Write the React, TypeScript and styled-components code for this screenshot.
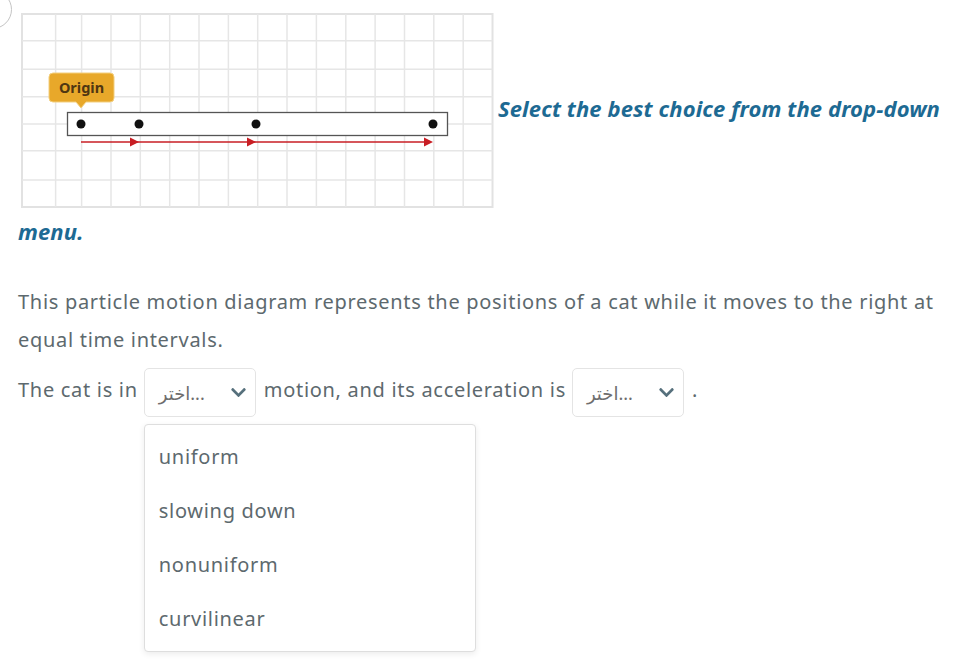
import styled, { createGlobalStyle } from 'styled-components';
import { FaChevronDown } from 'react-icons/fa';

const GlobalStyle = createGlobalStyle`
    body {
        margin: 0;
        background: #fff;
        font-family: "Noto Sans", "DejaVu Sans", sans-serif;
    }
`;

const Page = styled.div`
    position: relative;
    padding: 11px 18px;
    overflow: hidden;
    min-height: 648px;
`;

const CornerRing = styled.div`
    position: absolute;
    left: -27px;
    top: -10px;
    width: 37px;
    height: 37px;
    border: 1px solid #c4c4c4;
    border-radius: 50%;
`;

const Heading = styled.h2`
    margin: 0;
    font-size: 22px;
    font-weight: 700;
    font-style: italic;
    line-height: 40px;
    letter-spacing: 0.1px;
    color: #1d6a93;
`;

const Diagram = styled.svg`
    vertical-align: middle;
    margin-right: 2px;
    font-style: normal;
    letter-spacing: 0;
`;

const Para = styled.p`
    margin: 32px 0 0;
    font-size: 20px;
    line-height: 38px;
    letter-spacing: 0.7px;
    color: #5d696e;
`;

const BlankRow = styled(Para)`
    margin-top: 6px;
    line-height: 50px;
`;

const Anchor = styled.span`
    position: relative;
    display: inline-block;
    vertical-align: middle;
    margin: 0 8px 0 6px;
    letter-spacing: 0;
`;

const Picker = styled.span`
    display: inline-flex;
    align-items: center;
    justify-content: space-between;
    box-sizing: border-box;
    width: 112px;
    height: 49px;
    padding: 0 8px 0 14px;
    border: 1px solid #e4e4e4;
    border-radius: 5px;
    vertical-align: middle;
    font-size: 18px;
    color: #6e6e6e;
    svg {
        color: #56707c;
    }
`;

const Menu = styled.div`
    position: absolute;
    top: calc(100% + 7px);
    left: 0;
    width: 332px;
    box-sizing: border-box;
    padding: 5px 0;
    background: #fff;
    border: 1px solid #dedede;
    border-radius: 4px;
    box-shadow: 0 2px 6px rgba(0, 0, 0, 0.08);
    z-index: 2;
`;

const Option = styled.div`
    height: 54px;
    display: flex;
    align-items: center;
    padding: 0 14px;
    font-size: 20px;
    letter-spacing: 0.7px;
    color: #5d696e;
    white-space: nowrap;
`;

const vLines = [37.6, 63.6, 93, 122.3, 151.7, 181, 210.4, 239.7, 269, 298.4, 327.8, 357.1, 386.5, 415.8, 445.2];
const hLines = [29.7, 58.3, 85.7, 113, 139.7, 169];
const dots = [63, 121, 238, 415];

const MotionDiagram = () => (
    <Diagram width="478" height="200" viewBox="0 0 478 200">
        <rect x="4" y="3" width="470.5" height="193" fill="#fff" stroke="#e2e2e2" strokeWidth="2" />
        {vLines.map(x => (
            <line key={'v' + x} x1={x} y1="3" x2={x} y2="196" stroke="#e6e6e6" strokeWidth="1.5" />
        ))}
        {hLines.map(y => (
            <line key={'h' + y} x1="4" y1={y} x2="474.5" y2={y} stroke="#e6e6e6" strokeWidth="1.5" />
        ))}
        <rect x="49.5" y="101.5" width="380" height="23" fill="#fff" stroke="#555" strokeWidth="1.3" />
        {dots.map(x => (
            <circle key={'d' + x} cx={x} cy="113" r="4.5" fill="#111" />
        ))}
        <line x1="63" y1="131" x2="410" y2="131" stroke="#c81e24" strokeWidth="1.4" />
        {dots.slice(1).map(x => (
            <polygon key={'a' + x} points={`${x - 9},126.5 ${x},131 ${x - 9},135.5`} fill="#c81e24" />
        ))}
        <path d="M35 62 H92 Q96 62 96 66 V87 Q96 91 92 91 H68 L63 97 L58 91 H35 Q31 91 31 87 V66 Q31 62 35 62 Z"
            fill="#e8a82a" stroke="#f3cf7e" strokeWidth="1" />
        <text x="63.5" y="82" textAnchor="middle" fontFamily="'Noto Sans', sans-serif" fontSize="14.5"
            fontWeight="700" fontStyle="normal" fill="#4f3612">Origin</text>
    </Diagram>
);

const choices = ['uniform', 'slowing down', 'nonuniform', 'curvilinear'];

const Blank = ({ open }: { open?: boolean }) => (
    <Anchor>
        <Picker>
            <span>اختر...</span>
            <FaChevronDown size={17} />
        </Picker>
        {open && (
            <Menu>
                {choices.map(c => <Option key={c}>{c}</Option>)}
            </Menu>
        )}
    </Anchor>
);

export default function App() {
    return (
        <Page>
            <GlobalStyle />
            <CornerRing />
            <Heading>
                <MotionDiagram />
                Select the best choice from the drop-down menu.
            </Heading>
            <Para>
                This particle motion diagram represents the positions of a cat while it moves to the right at equal time intervals.
            </Para>
            <BlankRow>
                The cat is in<Blank open />motion, and its acceleration is<Blank />.
            </BlankRow>
        </Page>
    );
}
